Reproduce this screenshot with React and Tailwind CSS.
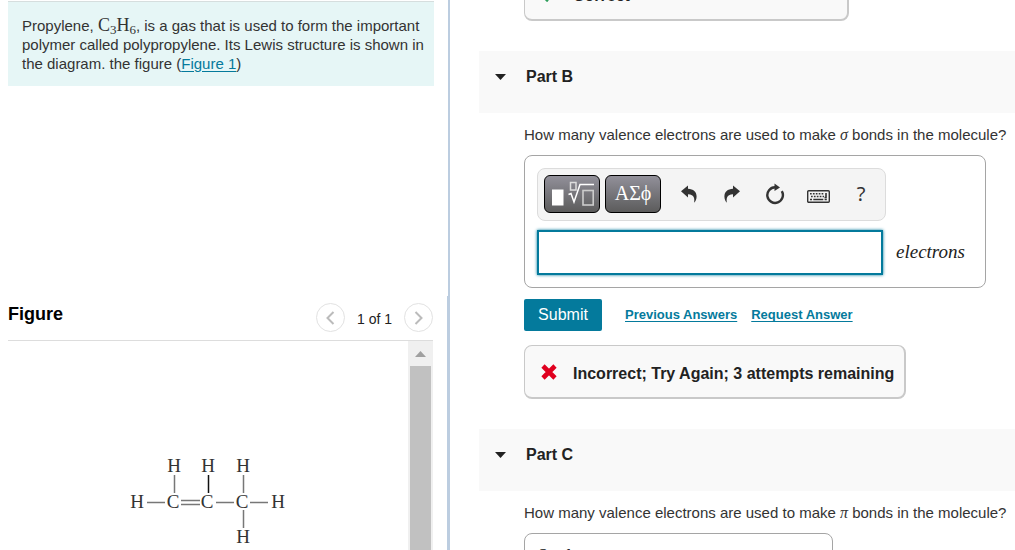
import React from 'react';

const LINK = 'text-[#047a9c] underline underline-offset-2';
const MATH = "font-['Liberation_Serif',serif]";

const IconButton = ({ label, children }) => (
  <button type="button" aria-label={label} className="flex h-7 w-7 items-center justify-center text-[#333]">
    {children}
  </button>
);

const UndoIcon = () => (
  <svg width="16" height="18" viewBox="0 0 16 18" fill="currentColor">
    <path d="M0 6.2 7 .6v3.200c5.400.2 8.600 3.200 8.600 7.600 0 2.400-.9 4.600-2.500 6.300.6-3.600.6-8.300-6.100-8.500v3.200z" />
  </svg>
);

const RedoIcon = () => (
  <svg width="16" height="18" viewBox="0 0 16 18" fill="currentColor">
    <path d="M16 6.200 9 .6v3.200C3.600 4 .4 7 .4 11.400c0 2.400.9 4.600 2.500 6.300-.6-3.600-.6-8.300 6.100-8.500v3.200z" />
  </svg>
);

const ResetIcon = () => (
  <svg width="20" height="22" viewBox="0 0 20 22" fill="none">
    <path d="M10 4.300a7.800 7.800 0 1 0 6.800 3.800" stroke="currentColor" strokeWidth="2.400" />
    <path d="M9.500.6 15 4.400 9.500 8z" fill="currentColor" />
  </svg>
);

const KeyboardIcon = () => (
  <svg width="23" height="17" viewBox="0 -4 23 17" fill="none" stroke="currentColor">
    <rect x=".7" y=".7" width="21.600" height="11.600" rx="1" strokeWidth="1.400" />
    <path d="M3 3.700h14.500M4 6.500h13" strokeWidth="1.600" strokeDasharray="1.700 1.200" />
    <path d="M3 9.500h2M6.300 9.500h10M17.600 9.500h2.200M19 3v4.500h-1.500" strokeWidth="1.600" />
  </svg>
);

const TemplateIcon = () => (
  <svg width="44" height="26" viewBox="0 0 44 26" fill="none">
    <rect x="2" y="8.500" width="11.500" height="16" fill="#fff" />
    <rect x="20.500" y="1.500" width="5.500" height="7.500" stroke="#ddd" strokeWidth="1.500" />
    <path d="M18.500 13.500 21 12.500 24 21 30 3.500H45" stroke="#fff" strokeWidth="1.500" />
    <rect x="33" y="9.500" width="10.200" height="14.500" stroke="#ccc" strokeWidth="1.600" />
  </svg>
);

const CrossIcon = () => (
  <svg width="16" height="16" viewBox="0 0 16 16" stroke="#e0001f" strokeWidth="4.600">
    <path d="M2 2 14 14M14 2 2 14" />
  </svg>
);

const CheckIcon = () => (
  <svg width="16" height="16" viewBox="0 0 16 16" fill="none" stroke="#2f9e5b" strokeWidth="3">
    <path d="M1 9 6 14 15 2" />
  </svg>
);

const atoms = [
  { s: 'H', x: 46, y: 17 },
  { s: 'H', x: 80, y: 17 },
  { s: 'H', x: 115, y: 17 },
  { s: 'H', x: 9, y: 53 },
  { s: 'C', x: 45, y: 53 },
  { s: 'C', x: 79, y: 53 },
  { s: 'C', x: 114, y: 53 },
  { s: 'H', x: 150, y: 53 },
  { s: 'H', x: 115, y: 88 },
];

const LewisStructure = () => (
  <svg width="160" height="95" viewBox="0 0 160 95" role="img" aria-label="Lewis structure of propylene">
    <g stroke="#777" strokeWidth="1.500" fill="none">
      <path d="M46.500 20v18M115.500 20v18M115.500 55v18" />
      <path d="M19 47.500h18M53 45.500h19M53 49.500h19M88 47.500h18M122 47.500h18" />
      <path d="M80.500 20v18" stroke="#111" />
    </g>
    <g fill="#333" fontSize="19" textAnchor="middle" className={MATH}>
      {atoms.map((a) => (
        <text key={`${a.x}-${a.y}`} x={a.x} y={a.y}>{a.s}</text>
      ))}
    </g>
  </svg>
);

const PagerButton = ({ label, d }) => (
  <button
    type="button"
    aria-label={label}
    className="flex h-[29px] w-[29px] items-center justify-center rounded-full border border-[#e2e2e2]"
  >
    <svg width="9" height="14" viewBox="0 0 9 14" fill="none" stroke="#bbb" strokeWidth="2">
      <path d={d} />
    </svg>
  </button>
);

const PartHeader = ({ title }) => (
  <button type="button" className="flex h-[62px] w-full items-start bg-[#f9f9f9] pt-4 pl-4 text-left">
    <svg width="11" height="20" viewBox="0 0 11 20" fill="#222">
      <path d="M0 7h11L5.500 13z" />
    </svg>
    <span className="pl-5 text-base leading-5 font-bold text-[#222]">{title}</span>
  </button>
);

const Feedback = ({ icon, children, className = '' }) => (
  <div
    className={`flex h-[54px] items-center gap-4 rounded-lg border border-r-2 border-b-2 border-[#c9c9c9] bg-[#f9f9f9] pr-2.5 pl-4 ${className}`}
  >
    {icon}
    <span className="pt-1 text-base font-bold text-[#222]">{children}</span>
  </div>
);

const Sidebar = () => (
  <aside className="flex min-h-0 min-w-0 flex-col">
    <div className="h-[296px] shrink-0 border-r-2 border-[#bccde0] pt-px pr-3.5 pl-2">
      <div className="h-[85px] border-t border-[#d6dede] bg-[#e6f6f6] pt-3.5 pr-1 pl-3.5">
        <p className="text-[15px] leading-[19px] text-[#333]">
          Propylene,{' '}
          <span className={`text-lg leading-none ${MATH}`}>
            C<sub className="text-[13px] leading-none">3</sub>H<sub className="text-[13px] leading-none">6</sub>
          </span>
          , is a gas that is used to form the important polymer called polypropylene. Its Lewis structure is
          shown in the diagram. the figure (<a href="#figure" className={LINK}>Figure 1</a>)
        </p>
      </div>
    </div>

    <section id="figure" className="flex min-h-0 flex-1 flex-col border-r-3 border-[#bccde0] pr-3.5 pl-2">
      <div className="flex h-[45px] shrink-0 items-start justify-between border-b border-[#ddd] pt-[7px]">
        <h2 className="text-lg leading-[22px] font-bold text-black">Figure</h2>
        <div className="flex items-center gap-3">
          <PagerButton label="Previous figure" d="M7.500 1 1.500 7 7.500 13" />
          <span className="pt-0.5 text-[14px] leading-5 text-[#222]">1 of 1</span>
          <PagerButton label="Next figure" d="M1.500 1 7.500 7 1.500 13" />
        </div>
      </div>
      <div className="flex min-h-0 flex-1 overflow-hidden">
        <div className="flex flex-1 items-start justify-center pt-[114px]">
          <LewisStructure />
        </div>
        <div className="flex w-[25px] flex-col bg-[#f0f0f0] px-0.5">
          <div className="flex h-[25px] items-center justify-center">
            <svg width="11" height="6" viewBox="0 0 11 6" fill="#a0a0a0">
              <path d="M0 6h11L5.500 0z" />
            </svg>
          </div>
          <div className="flex-1 bg-[#c1c1c1]" />
        </div>
      </div>
    </section>
  </aside>
);

const AnswerBox = () => (
  <div className="flex h-[133px] w-[462px] items-start rounded-lg border border-[#a5a5a5] p-3">
    <div className="flex w-[349px] flex-col gap-[9px]">
      <div className="flex h-[53px] items-start rounded-lg border border-[#dcdcdc] bg-[#f4f4f4] pt-1.5 pl-1.5">
        <button
          type="button"
          aria-label="Templates"
          className="flex h-[38px] w-14 items-center justify-center rounded-md border border-black bg-linear-to-b from-[#92909a] to-[#5c5c5c]"
        >
          <TemplateIcon />
        </button>
        <button
          type="button"
          aria-label="Symbols"
          className={`ml-[5px] h-[38px] w-14 rounded-md border border-black bg-linear-to-b from-[#92909a] to-[#5c5c5c] pb-0.5 text-xl leading-none text-white ${MATH}`}
        >
          ΑΣϕ
        </button>
        <div className="flex h-[38px] items-center gap-[15px] pl-3.5">
          <IconButton label="Undo"><UndoIcon /></IconButton>
          <IconButton label="Redo"><RedoIcon /></IconButton>
          <IconButton label="Reset"><ResetIcon /></IconButton>
          <IconButton label="Keyboard shortcuts"><KeyboardIcon /></IconButton>
          <IconButton label="Help">
            <span className="font-['Noto_Sans',sans-serif] text-xl leading-none">?</span>
          </IconButton>
        </div>
      </div>
      <input
        id="part-b-answer"
        type="text"
        className="h-[45px] w-[346px] border-2 border-[#047a9c] bg-white px-2 shadow-[0_0_3px_#047a9c] outline-none"
      />
    </div>
    <label htmlFor="part-b-answer" className={`pt-[72px] pl-2.5 text-[19px] leading-6 text-[#222] italic ${MATH}`}>
      electrons
    </label>
  </div>
);

const Question = ({ symbol }) => (
  <p className="pt-3 pb-2.5 text-[15px] leading-5 text-[#333]">
    How many valence electrons are used to make{' '}
    <span className={`text-base leading-none italic ${MATH}`}>{symbol}</span> bonds in the molecule?
  </p>
);

const App = () => (
  <div className="grid h-screen grid-cols-[450fr_565fr] overflow-hidden bg-white font-['Liberation_Sans',Arial,sans-serif]">
    <Sidebar />
    <main className="min-w-0 overflow-hidden pl-[29px]">
      <div className="-mt-[33px] pb-[30px] pl-[45px]">
        <Feedback icon={<CheckIcon />} className="w-[325px]">Correct</Feedback>
      </div>

      <PartHeader title="Part B" />
      <div className="pb-[30px] pl-[45px]">
        <Question symbol="σ" />
        <AnswerBox />
        <div className="flex items-center pt-[11px] pb-3.5">
          <button type="submit" className="h-8 w-[78px] rounded-xs bg-[#047a9c] text-base leading-none text-white">
            Submit
          </button>
          <a href="#previous" className={`ml-[23px] text-[13px] font-bold ${LINK}`}>Previous Answers</a>
          <a href="#request" className={`ml-3.5 text-[13px] font-bold ${LINK}`}>Request Answer</a>
        </div>
        <Feedback icon={<CrossIcon />} className="w-fit">Incorrect; Try Again; 3 attempts remaining</Feedback>
      </div>

      <PartHeader title="Part C" />
      <div className="pl-[45px]">
        <Question symbol="π" />
        <div className="flex h-[54px] w-[309px] items-start gap-2 rounded-lg border border-[#a5a5a5] px-3.5 pt-2.5">
          <span className={`text-[19px] leading-6 text-[#222] ${MATH}`}>2</span>
          <span className={`text-[19px] leading-6 text-[#222] italic ${MATH}`}>electrons</span>
        </div>
      </div>
    </main>
  </div>
);

export default App;
